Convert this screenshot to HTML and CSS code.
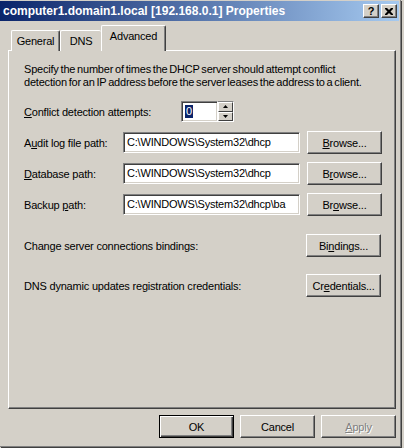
FILE: index.html
```html
<!DOCTYPE html>
<html>
<head>
<meta charset="utf-8">
<link rel="stylesheet" href="styles.css">
</head>
<body>
<div class="window">
  <div class="titlebar">
    <span class="title">computer1.domain1.local [192.168.0.1] Properties</span>
    <div class="caption-btns">
      <span class="cbtn help">?</span>
      <span class="cbtn close"><svg width="8" height="7" viewBox="0 0 8 7"><path d="M0 0h2l2 2 2-2h2v1L5.5 3.5 8 6v1H6L4 5 2 7H0V6l2.5-2.5L0 1z" fill="#000"/></svg></span>
    </div>
  </div>
  <div class="tabs">
    <div class="tab t-general">General</div>
    <div class="tab t-dns">DNS</div>
    <div class="tab t-adv active">Advanced</div>
  </div>
  <div class="panel">
    <p class="intro">Specify the number of times the DHCP server should attempt conflict<br>detection for an IP address before the server leases the address to a client.</p>
    <div class="rows">
      <div class="row">
        <span class="label conflict"><u>C</u>onflict detection attempts:</span>
        <div class="spinner">
          <div class="field spin-field"><span class="sel">0</span></div>
          <div class="updown">
            <span class="ud up"><svg width="5" height="3" viewBox="0 0 5 3"><path d="M2.5 0L5 3H0z" fill="#000"/></svg></span>
            <span class="ud down"><svg width="5" height="3" viewBox="0 0 5 3"><path d="M0 0h5L2.5 3z" fill="#000"/></svg></span>
          </div>
        </div>
      </div>
      <div class="row">
        <span class="label">A<u>u</u>dit log file path:</span>
        <div class="field path">C:\WINDOWS\System32\dhcp</div>
        <span class="btn"><u>B</u>rowse...</span>
      </div>
      <div class="row">
        <span class="label"><u>D</u>atabase path:</span>
        <div class="field path">C:\WINDOWS\System32\dhcp</div>
        <span class="btn">B<u>r</u>owse...</span>
      </div>
      <div class="row">
        <span class="label">Backup <u>p</u>ath:</span>
        <div class="field path">C:\WINDOWS\System32\dhcp\ba</div>
        <span class="btn">Br<u>o</u>wse...</span>
      </div>
      <div class="row row-gap">
        <span class="label wide">Change server connections bindings:</span>
        <span class="btn">Bi<u>n</u>dings...</span>
      </div>
      <div class="row row-gap2">
        <span class="label wide">DNS dynamic updates registration credentials:</span>
        <span class="btn">Cr<u>e</u>dentials...</span>
      </div>
    </div>
  </div>
  <div class="footer">
    <span class="btn default">OK</span>
    <span class="btn">Cancel</span>
    <span class="btn disabled"><u>A</u>pply</span>
  </div>
</div>
</body>
</html>
```
FILE: styles.css
```css
* { box-sizing: border-box; }
html, body { margin: 0; padding: 0; }
body {
  width: 404px;
  height: 448px;
  background: #d4d0c8;
  font-family: "Liberation Sans", Arial, sans-serif;
  font-size: 11px;
  letter-spacing: -0.2px;
  color: #000;
  overflow: hidden;
}
.window {
  width: 401px;
  height: 447px;
  border-right: 1px solid #808080;
  border-bottom: 1px solid #808080;
  box-shadow: 1px 1px 0 #404040;
  padding-top: 1px;
  display: flex;
  flex-direction: column;
}
.titlebar {
  height: 20px;
  width: 399px;
  background: linear-gradient(to right, #0a246a, #a6caf0);
  display: flex;
  align-items: center;
  justify-content: space-between;
  padding: 0 2px 0 3px;
}
.title {
  color: #fff;
  font-weight: bold;
  font-size: 12px;
  letter-spacing: 0;
  white-space: nowrap;
}
.caption-btns { display: flex; gap: 2px; }
.cbtn {
  width: 16px;
  height: 14px;
  background: #d4d0c8;
  border: 1px solid;
  border-color: #fff #404040 #404040 #fff;
  box-shadow: inset -1px -1px #808080;
  display: flex;
  align-items: center;
  justify-content: center;
  font-weight: bold;
  font-size: 11px;
  line-height: 1;
}
.tabs {
  display: flex;
  align-items: flex-end;
  height: 25px;
  margin-top: 4px;
  padding-left: 11px;
  position: relative;
  z-index: 1;
}
.tab {
  height: 21px;
  margin-bottom: -1px;
  background: #d4d0c8;
  border-left: 1px solid #fff;
  border-top: 1px solid #fff;
  border-right: 1px solid #404040;
  box-shadow: inset -1px 0 #808080;
  border-radius: 2px 2px 0 0;
  display: flex;
  align-items: center;
  justify-content: center;
  padding-bottom: 1px;
}
.t-general { width: 49px; }
.t-dns { width: 41px; border-right: none; box-shadow: none; }
.t-adv { width: 65px; }
.tab.active {
  height: 26px;
  padding-bottom: 6px;
  margin-bottom: -1px;
}
.panel {
  margin-left: 8px;
  width: 388px;
  height: 359px;
  border-left: 1px solid #fff;
  border-top: 1px solid #fff;
  border-right: 1px solid #404040;
  border-bottom: 1px solid #404040;
  box-shadow: inset -1px -1px #808080;
  padding: 12px 13px 0 15px;
}
.intro {
  margin: 0;
  line-height: 13px;
  word-spacing: -1px;
  white-space: nowrap;
}
.rows {
  display: flex;
  flex-direction: column;
  gap: 8px;
  margin-top: 11px;
}
.row {
  display: flex;
  align-items: center;
  height: 23px;
}
.row-gap { margin-top: 10px; }
.row-gap2 { margin-top: 9px; }
.label { width: 99px; white-space: nowrap; }
.label.conflict { width: 157px; }
.label.wide { width: 282px; }
.field {
  height: 21px;
  background: #fff;
  border: 1px solid;
  border-color: #808080 #fff #fff #808080;
  box-shadow: inset 1px 1px #404040, inset -1px -1px #d4d0c8;
  padding: 3px 0 0 3px;
  white-space: nowrap;
  overflow: hidden;
  line-height: 13px;
}
.path { width: 177px; margin-right: 7px; }
.spinner { display: flex; }
.spin-field { width: 37px; padding-left: 3px; }
.sel {
  display: inline-block;
  background: #0a246a;
  color: #fff;
  height: 13px;
  padding: 0 1px;
}
.updown {
  display: flex;
  flex-direction: column;
  height: 21px;
  border-top: 1px solid #808080;
  border-bottom: 1px solid #fff;
  border-right: 1px solid #fff;
  width: 16px;
}
.ud {
  flex: 1;
  background: #d4d0c8;
  border: 1px solid;
  border-color: #fff #404040 #404040 #fff;
  display: flex;
  align-items: center;
  justify-content: center;
}
.btn {
  width: 75px;
  height: 23px;
  background: #d4d0c8;
  border: 1px solid;
  border-color: #fff #404040 #404040 #fff;
  box-shadow: inset -1px -1px #808080;
  display: flex;
  align-items: center;
  justify-content: center;
  white-space: nowrap;
  flex: none;
}
.btn.default {
  border: 1px solid #000;
  box-shadow: inset 1px 1px #fff, inset -1px -1px #404040, inset -2px -2px #808080;
}
.btn.disabled {
  color: #808080;
  text-shadow: 1px 1px 0 #fff;
}
.footer {
  display: flex;
  justify-content: flex-end;
  gap: 6px;
  margin-top: 6px;
  width: 396px;
}
```
